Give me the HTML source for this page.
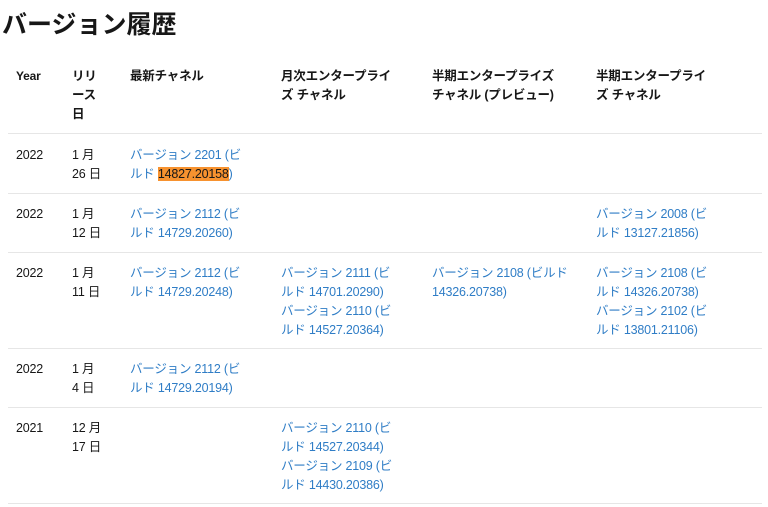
<!DOCTYPE html>
<html><head><meta charset="utf-8"><style>
body{margin:0;width:768px;height:507px;background:#fff;font-family:"Segoe UI","Liberation Sans","Noto Sans CJK JP",sans-serif;color:#171717;position:relative;overflow:hidden}
h1{position:absolute;left:2px;top:6px;margin:0;font-size:25px;font-weight:700;line-height:38px}
.c{position:absolute;font-size:12.5px;line-height:19px;white-space:nowrap;letter-spacing:-0.2px}
.h{font-weight:700}
a{color:#2f7dc6;text-decoration:none}
.hl{background:#f7922f;color:#171717}
.ln{position:absolute;left:8px;width:754px;height:1px;background:#e6e6e6}
</style></head><body>
<h1>バージョン履歴</h1>
<div class="c h" style="left:16px;top:67px;font-size:12px">Year</div>
<div class="c h" style="left:72px;top:67px">リリ<br>ース<br>日</div>
<div class="c h" style="left:130px;top:67px">最新チャネル</div>
<div class="c h" style="left:281px;top:67px">月次エンタープライ<br>ズ チャネル</div>
<div class="c h" style="left:432px;top:67px">半期エンタープライズ<br>チャネル (プレビュー)</div>
<div class="c h" style="left:596px;top:67px">半期エンタープライ<br>ズ チャネル</div>
<div class="ln" style="top:133px"></div>

<div class="c" style="left:16px;top:146px">2022</div>
<div class="c" style="left:72px;top:146px">1 月<br>26 日</div>
<div class="c" style="left:130px;top:146px"><a>バージョン 2201 (ビ<br>ルド <span class="hl">14827.20158</span>)</a></div>
<div class="ln" style="top:193px"></div>

<div class="c" style="left:16px;top:205px">2022</div>
<div class="c" style="left:72px;top:205px">1 月<br>12 日</div>
<div class="c" style="left:130px;top:205px"><a>バージョン 2112 (ビ<br>ルド 14729.20260)</a></div>
<div class="c" style="left:596px;top:205px"><a>バージョン 2008 (ビ<br>ルド 13127.21856)</a></div>
<div class="ln" style="top:252px"></div>

<div class="c" style="left:16px;top:264px">2022</div>
<div class="c" style="left:72px;top:264px">1 月<br>11 日</div>
<div class="c" style="left:130px;top:264px"><a>バージョン 2112 (ビ<br>ルド 14729.20248)</a></div>
<div class="c" style="left:281px;top:264px"><a>バージョン 2111 (ビ<br>ルド 14701.20290)<br>バージョン 2110 (ビ<br>ルド 14527.20364)</a></div>
<div class="c" style="left:432px;top:264px"><a>バージョン 2108 (ビルド<br>14326.20738)</a></div>
<div class="c" style="left:596px;top:264px"><a>バージョン 2108 (ビ<br>ルド 14326.20738)<br>バージョン 2102 (ビ<br>ルド 13801.21106)</a></div>
<div class="ln" style="top:348px"></div>

<div class="c" style="left:16px;top:360px">2022</div>
<div class="c" style="left:72px;top:360px">1 月<br>4 日</div>
<div class="c" style="left:130px;top:360px"><a>バージョン 2112 (ビ<br>ルド 14729.20194)</a></div>
<div class="ln" style="top:407px"></div>

<div class="c" style="left:16px;top:419px">2021</div>
<div class="c" style="left:72px;top:419px">12 月<br>17 日</div>
<div class="c" style="left:281px;top:419px"><a>バージョン 2110 (ビ<br>ルド 14527.20344)<br>バージョン 2109 (ビ<br>ルド 14430.20386)</a></div>
<div class="ln" style="top:503px"></div>
</body></html>
